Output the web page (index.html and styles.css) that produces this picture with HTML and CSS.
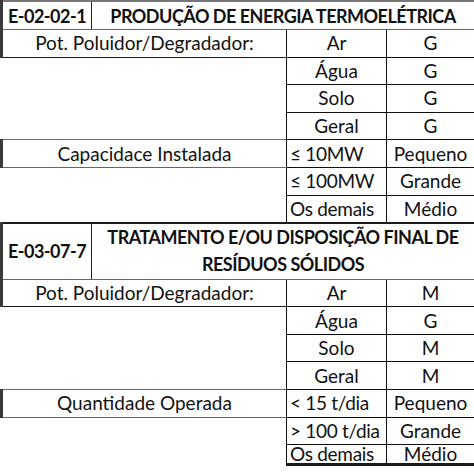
FILE: index.html
```html
<!DOCTYPE html>
<html lang="pt">
<head>
<meta charset="utf-8">
<title>Tabela</title>
<link rel="stylesheet" href="styles.css">
</head>
<body>
<table class="sheet">
  <colgroup><col class="c1"><col class="c2"><col class="c3"><col class="c4"></colgroup>
  <tbody>
    <tr class="rh1"><td class="code top">E-02-02-1</td><td class="title top" colspan="3">PRODUÇÃO DE ENERGIA TERMOELÉTRICA</td></tr>
    <tr class="r"><td class="label" colspan="2">Pot. Poluidor/Degradador:</td><td class="mid">Ar</td><td class="val">G</td></tr>
    <tr class="r"><td class="blank" colspan="2"></td><td class="mid">Água</td><td class="val">G</td></tr>
    <tr class="r"><td class="blank" colspan="2"></td><td class="mid">Solo</td><td class="val">G</td></tr>
    <tr class="r"><td class="blank" colspan="2"></td><td class="mid">Geral</td><td class="val">G</td></tr>
    <tr class="r"><td class="label lowgray" colspan="2">Capacidace Instalada</td><td class="mid left">≤ 10MW</td><td class="val">Pequeno</td></tr>
    <tr class="r"><td class="blank" colspan="2"></td><td class="mid left">≤ 100MW</td><td class="val">Grande</td></tr>
    <tr class="r"><td class="blank" colspan="2"></td><td class="mid left">Os demais</td><td class="val">Médio</td></tr>
    <tr class="rh2"><td class="code sect">E-03-07-7</td><td class="title sect" colspan="3">TRATAMENTO E/OU DISPOSIÇÃO FINAL DE<br>RESÍDUOS SÓLIDOS</td></tr>
    <tr class="r"><td class="label" colspan="2">Pot. Poluidor/Degradador:</td><td class="mid">Ar</td><td class="val">M</td></tr>
    <tr class="r"><td class="blank" colspan="2"></td><td class="mid">Água</td><td class="val">G</td></tr>
    <tr class="r"><td class="blank" colspan="2"></td><td class="mid">Solo</td><td class="val">M</td></tr>
    <tr class="r"><td class="blank" colspan="2"></td><td class="mid">Geral</td><td class="val">M</td></tr>
    <tr class="r"><td class="label lowgray" colspan="2">Quantidade Operada</td><td class="mid left">&lt; 15 t/dia</td><td class="val">Pequeno</td></tr>
    <tr class="r"><td class="blank" colspan="2"></td><td class="mid left">&gt; 100 t/dia</td><td class="val">Grande</td></tr>
    <tr class="rlast"><td class="blank" colspan="2"></td><td class="mid left last">Os demais</td><td class="val last">Médio</td></tr>
  </tbody>
</table>
</body>
</html>
```
FILE: styles.css
```css
html, body {
  margin: 0;
  padding: 0;
  background: #fff;
}
.sheet {
  border-collapse: collapse;
  table-layout: fixed;
  width: 474px;
  font-family: Lato, "Open Sans", sans-serif;
  font-size: 19px;
  color: #111;
}
.c1 { width: 90px; }
.c2 { width: 195px; }
.c3 { width: 100px; }
.c4 { width: 88px; }
td {
  padding: 0;
  text-align: center;
  vertical-align: middle;
  white-space: nowrap;
  line-height: 20px;
}
.rh1 { height: 28.5px; }
.r { height: 27.6px; }
.rh2 { height: 56.5px; }
.rlast { height: 20px; }
.code {
  font-weight: bold;
  font-size: 18px;
  letter-spacing: -0.5px;
  border: 1px solid #222;
  border-left: 3px solid #3a3a3a;
  border-bottom: 1px solid #666;
}
.title {
  font-weight: bold;
  font-size: 18px;
  letter-spacing: -0.5px;
  border: 1px solid #222;
  border-right: 1px solid #777;
  border-bottom: 1px solid #666;
}
.title.sect { line-height: 27px; }
.top { border-top: 2px solid #777; }
.sect { border-top: 2px solid #1a1a1a; }
.label {
  border-top: 1px solid #666;
  border-bottom: 1px solid #1a1a1a;
  border-left: 3px solid #3a3a3a;
  border-right: 1px solid #111;
}
.lowgray { border-bottom: 1px solid #666; }
.blank { border: none; }
.mid {
  border: 1px solid #111;
}
.mid.left {
  text-align: left;
  padding-left: 3px;
  letter-spacing: -0.3px;
}
.val {
  border: 1px solid #111;
  border-right: 1px solid #777;
}
.last {
  border-bottom: 3px solid #1a1a1a;
  vertical-align: bottom;
  line-height: 18px;
}
```
